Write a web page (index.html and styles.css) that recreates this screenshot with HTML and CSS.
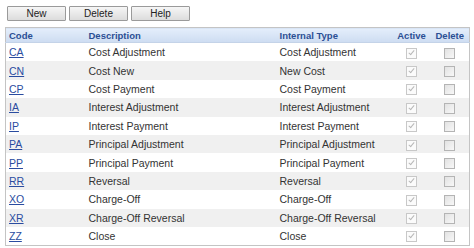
FILE: index.html
```html
<!DOCTYPE html>
<html lang="en">
<head>
  <meta charset="UTF-8" />
  <title>Transaction Codes</title>
  <link rel="stylesheet" href="styles.css">
</head>
<body>
  <div class="toolbar">
    <button>New</button>
    <button>Delete</button>
    <button>Help</button>
  </div>

  <table class="codes">
    <colgroup>
      <col class="col-code">
      <col class="col-desc">
      <col class="col-type">
      <col class="col-active">
      <col class="col-delete">
    </colgroup>
    <thead>
      <tr>
        <th>Code</th>
        <th>Description</th>
        <th>Internal Type</th>
        <th class="center">Active</th>
        <th class="center">Delete</th>
      </tr>
    </thead>
    <tbody>
      <tr><td><a href="#">CA</a></td><td>Cost Adjustment</td><td>Cost Adjustment</td><td class="center"><span class="box checked"></span></td><td class="center"><span class="box"></span></td></tr>
      <tr><td><a href="#">CN</a></td><td>Cost New</td><td>New Cost</td><td class="center"><span class="box checked"></span></td><td class="center"><span class="box"></span></td></tr>
      <tr><td><a href="#">CP</a></td><td>Cost Payment</td><td>Cost Payment</td><td class="center"><span class="box checked"></span></td><td class="center"><span class="box"></span></td></tr>
      <tr><td><a href="#">IA</a></td><td>Interest Adjustment</td><td>Interest Adjustment</td><td class="center"><span class="box checked"></span></td><td class="center"><span class="box"></span></td></tr>
      <tr><td><a href="#">IP</a></td><td>Interest Payment</td><td>Interest Payment</td><td class="center"><span class="box checked"></span></td><td class="center"><span class="box"></span></td></tr>
      <tr><td><a href="#">PA</a></td><td>Principal Adjustment</td><td>Principal Adjustment</td><td class="center"><span class="box checked"></span></td><td class="center"><span class="box"></span></td></tr>
      <tr><td><a href="#">PP</a></td><td>Principal Payment</td><td>Principal Payment</td><td class="center"><span class="box checked"></span></td><td class="center"><span class="box"></span></td></tr>
      <tr><td><a href="#">RR</a></td><td>Reversal</td><td>Reversal</td><td class="center"><span class="box checked"></span></td><td class="center"><span class="box"></span></td></tr>
      <tr><td><a href="#">XO</a></td><td>Charge-Off</td><td>Charge-Off</td><td class="center"><span class="box checked"></span></td><td class="center"><span class="box"></span></td></tr>
      <tr><td><a href="#">XR</a></td><td>Charge-Off Reversal</td><td>Charge-Off Reversal</td><td class="center"><span class="box checked"></span></td><td class="center"><span class="box"></span></td></tr>
      <tr><td><a href="#">ZZ</a></td><td>Close</td><td>Close</td><td class="center"><span class="box checked"></span></td><td class="center"><span class="box"></span></td></tr>
    </tbody>
  </table>
</body>
</html>
```

FILE: styles.css
```css
body {
  font-family: 'Liberation Sans', Arial, sans-serif;
  font-size: 10.5px;
  color: #333;
  background-color: #fff;
  margin: 0;
  padding: 6px 5px 0;
}

.toolbar {
  display: flex;
  gap: 3px;
  padding-left: 2px;
  margin-bottom: 6px;
}

button {
  width: 59px;
  height: 15px;
  padding: 0;
  font-family: inherit;
  font-size: 10px;
  color: #222;
  border: 1px solid #9a9a9a;
  border-radius: 1px;
  background: linear-gradient(#f6f6f6, #dcdcdc);
  cursor: pointer;
}

.codes {
  width: 464px;
  table-layout: fixed;
  border-collapse: collapse;
  border: 1px solid #c4c4c4;
}

.col-code {
  width: 80px;
}

.col-desc {
  width: 191px;
}

.col-type {
  width: 116px;
}

.col-active {
  width: 38px;
}

.col-delete {
  width: 39px;
}

.codes th {
  height: 14px;
  padding: 0 3px;
  text-align: left;
  font-size: 9.5px;
  font-weight: bold;
  color: #2b4f94;
  background: linear-gradient(#e4eefb, #cddcf1);
  border-bottom: 1px solid #c4d3e8;
}

.codes td {
  height: 18.4px;
  padding: 0 3px;
  white-space: nowrap;
}

.codes tbody tr:nth-child(even) td {
  background-color: #f0f0f0;
}

.codes .center {
  text-align: center;
}

a {
  color: #2a4ca0;
}

.box {
  display: inline-block;
  width: 9px;
  height: 9px;
  border: 1px solid #b4b4b4;
  background: linear-gradient(135deg, #e2e2e2, #f8f8f8);
  vertical-align: middle;
  position: relative;
}

.box.checked {
  background: #fbfbfb;
  border-color: #c8c8c8;
}

.box.checked::after {
  content: "";
  position: absolute;
  left: 3px;
  top: 0;
  width: 2px;
  height: 5px;
  border: solid #b8b8b8;
  border-width: 0 1px 1px 0;
  transform: rotate(40deg);
}
```
